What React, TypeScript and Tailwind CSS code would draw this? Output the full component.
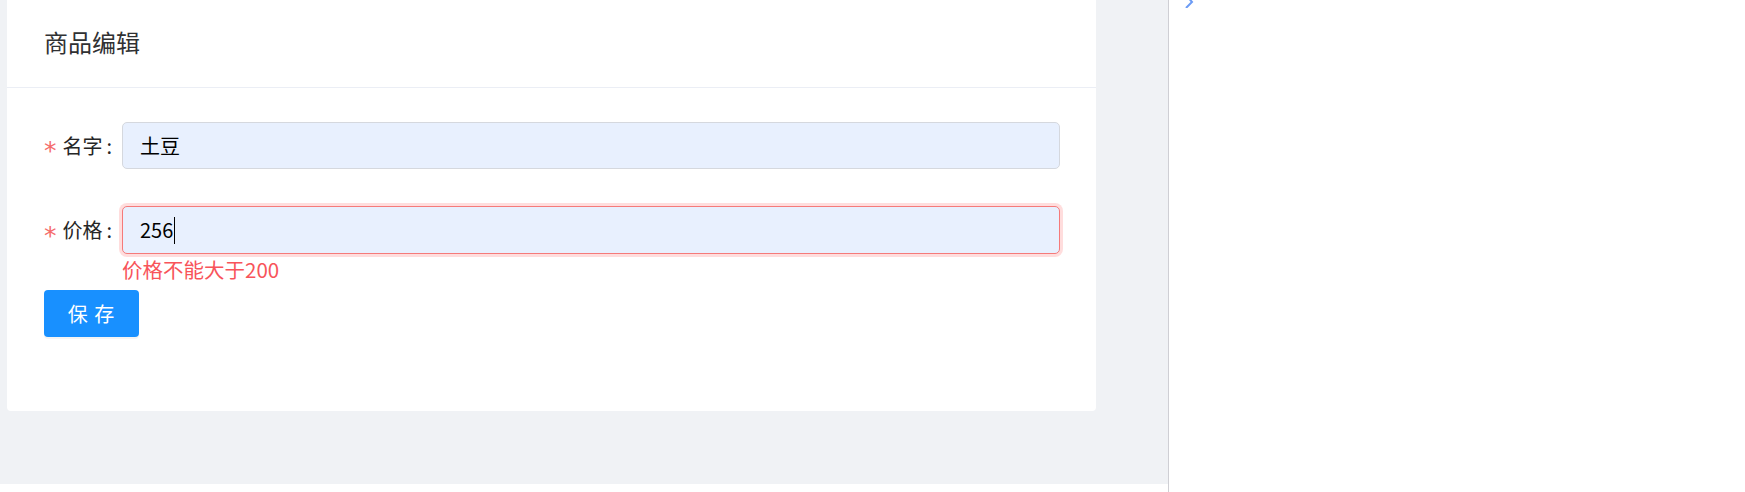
const font = "font-['Noto_Sans_CJK_SC','Noto_Sans',sans-serif]";

function FormLabel({ text }: { text: string }) {
    return (
        <div className="flex w-[78px] shrink-0 items-center text-[20px] text-[#262626]">
            <span className="mr-[6px] translate-y-[5px] font-['DejaVu_Sans',sans-serif] text-[25px] leading-none text-[#f56c6c]">*</span>
            <span>{text}</span>
            <span className="ml-[4px]">:</span>
        </div>
    );
}

export default function App() {
    return (
        <div className={`flex h-[492px] w-[1745px] bg-white ${font}`}>
            {/* main area */}
            <div className="flex w-[1169px] shrink-0 flex-col border-r border-[#cfcfd4]">
                <div className="h-[484px] bg-[#f0f2f5] pl-[7px]">
                    <div className="w-[1089px] rounded-b-[4px] bg-white">
                        <div className="flex h-[88px] items-center border-b border-[#ebeef5] pb-[4px] pl-[37px] text-[24px] text-[#303133]">
                            商品编辑
                        </div>
                        <div className="flex flex-col pt-[34px] pr-[36px] pb-[74px] pl-[37px]">
                            <div className="flex h-[47px] items-center">
                                <FormLabel text="名字" />
                                <div className="flex h-full flex-1 items-center rounded-[5px] border border-[#d5d8de] bg-[#e8f0fe] pl-[17px] text-[20px] text-black">
                                    土豆
                                </div>
                            </div>
                            <div className="mt-[37px] flex h-[48px] items-center">
                                <FormLabel text="价格" />
                                <div className="flex h-full flex-1 items-center rounded-[5px] border border-[#f57a7a] bg-[#e8f0fe] pl-[17px] text-[20px] text-black shadow-[0_0_0_3px_rgba(255,120,120,0.25)]">
                                    256
                                    <span className="ml-[1px] h-[27px] w-px bg-black" />
                                </div>
                            </div>
                            <div className="mt-[3px] ml-[78px] text-[20.5px] leading-[24px] text-[#f8545a]">价格不能大于200</div>
                            <button className="mt-[9px] h-[47px] w-[95px] rounded-[4px] bg-[#1890ff] text-[20px] tracking-[1px] text-white shadow-[0_2px_0_rgba(0,0,0,0.045)]">
                                保 存
                            </button>
                        </div>
                    </div>
                </div>
            </div>
            {/* side pane */}
            <div className="flex-1 bg-white">
                <svg width="10" height="8" viewBox="0 0 10 8" className="ml-[15px] block">
                    <path d="M3 -4 L8 2 L2 8" fill="none" stroke="#6b9bf5" strokeWidth="2" />
                </svg>
            </div>
        </div>
    );
}
